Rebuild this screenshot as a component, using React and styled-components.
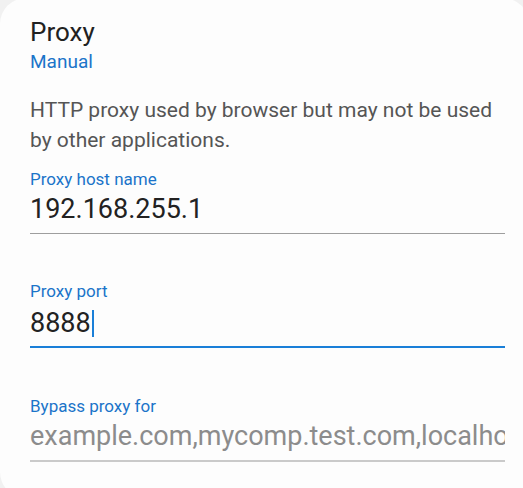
import React from "react";
import styled, { createGlobalStyle } from "styled-components";

const Global = createGlobalStyle`
  html, body {
    margin: 0;
    padding: 0;
    background: #f1f1f1;
    font-family: Roboto, "Noto Sans", sans-serif;
    overflow: hidden;
  }
  #root { height: 488px; overflow: hidden; }
`;

const Card = styled.section`
  margin: -2px -6px 0 0;
  min-height: 500px;
  box-sizing: border-box;
  background: #fdfdfd;
  border-radius: 26px;
  padding: 19px 24px 0 30px;
  display: flex;
  flex-direction: column;
`;

const Title = styled.div`
  font-size: 26px;
  line-height: 30px;
  color: #212121;
`;

const Summary = styled.div`
  margin-top: 2px;
  font-size: 19px;
  line-height: 26px;
  color: #1b74c9;
`;

const Description = styled.p`
  margin: 20px 0 0;
  font-size: 21px;
  line-height: 30px;
  color: #555555;
`;

const FieldWrap = styled.div`
  margin-top: ${(p) => p.$top}px;
  display: flex;
  flex-direction: column;
  padding-bottom: ${(p) => (p.$focused ? 6 : 7)}px;
  border-bottom: ${(p) =>
    p.$focused ? "2px solid #1a7fd8" : p.$empty ? "2px solid #cacaca" : "1px solid #9e9e9e"};
`;

const Label = styled.div`
  font-size: 17px;
  line-height: 22px;
  color: #1b74c9;
`;

const Value = styled.div`
  margin-top: ${(p) => p.$gap}px;
  font-size: 27px;
  line-height: 34px;
  color: ${(p) => (p.$empty ? "#8c8c8c" : "#222222")};
  white-space: nowrap;
  overflow: hidden;
  text-overflow: clip;
`;

const Caret = styled.span`
  display: inline-block;
  width: 2px;
  height: 27px;
  margin-left: 1px;
  background: #1a7fd8;
  vertical-align: -5px;
`;

function Field({ label, value, placeholder, focused, top, gap }) {
  const empty = !value;
  return (
    <FieldWrap $top={top} $focused={focused} $empty={empty}>
      <Label>{label}</Label>
      <Value $empty={empty} $gap={gap}>
        {value || placeholder}
        {focused && <Caret />}
      </Value>
    </FieldWrap>
  );
}

export default function App() {
  return (
    <>
      <Global />
      <Card>
        <Title>Proxy</Title>
        <Summary>Manual</Summary>
        <Description>
          HTTP proxy used by browser but may not be used by other applications.
        </Description>
        <Field label="Proxy host name" value="192.168.255.1" top={13} gap={2} />
        <Field label="Proxy port" value="8888" focused top={46} gap={4} />
        <Field
          label="Bypass proxy for"
          placeholder="example.com,mycomp.test.com,localhost"
          top={47}
          gap={2}
        />
      </Card>
    </>
  );
}
